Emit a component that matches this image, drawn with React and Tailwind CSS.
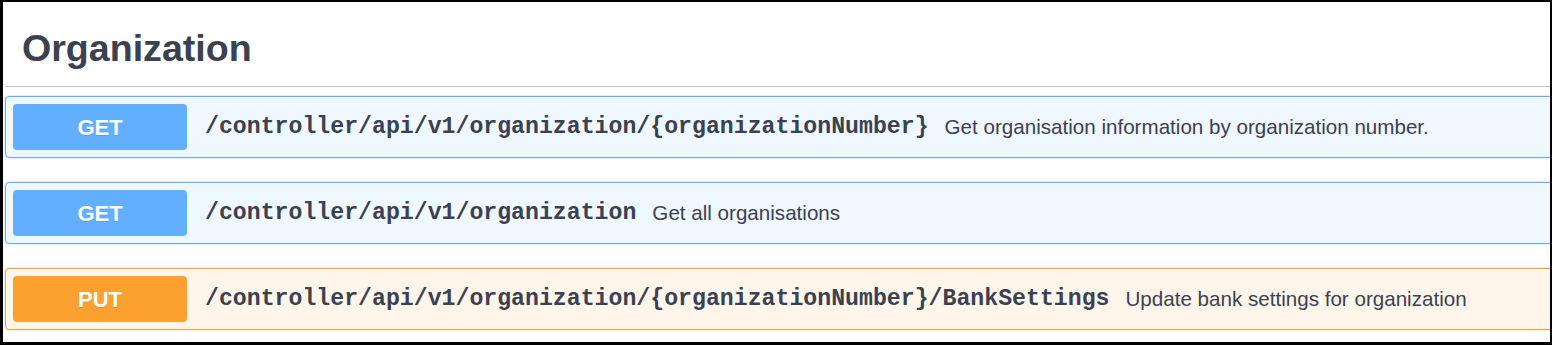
const endpoints = [
  {
    method: 'GET',
    path: '/controller/api/v1/organization/{organizationNumber}',
    summary: 'Get organisation information by organization number.',
  },
  {
    method: 'GET',
    path: '/controller/api/v1/organization',
    summary: 'Get all organisations',
  },
  {
    method: 'PUT',
    path: '/controller/api/v1/organization/{organizationNumber}/BankSettings',
    summary: 'Update bank settings for organization',
  },
];

function Endpoint({ method, path, summary }) {
  const isGet = method === 'GET';
  return (
    <div
      className={
        isGet
          ? 'flex items-center mr-[-20px] rounded-[4px] border border-[#61affe] bg-[#eff7ff] p-[7px] shadow-[0_0_3px_rgba(0,0,0,0.19)]'
          : 'flex items-center mr-[-20px] rounded-[4px] border border-[#fca130] bg-[#fff5ea] p-[7px] shadow-[0_0_3px_rgba(0,0,0,0.19)]'
      }
    >
      <span
        className={
          isGet
            ? 'flex h-[46px] w-[174px] shrink-0 items-center justify-center rounded-[4px] bg-[#61affe] text-[22px] font-bold text-white [text-shadow:0_1px_0_rgba(0,0,0,0.1)]'
            : 'flex h-[46px] w-[174px] shrink-0 items-center justify-center rounded-[4px] bg-[#fca130] text-[22px] font-bold text-white [text-shadow:0_1px_0_rgba(0,0,0,0.1)]'
        }
      >
        {method}
      </span>
      <span className="ml-[18px] font-['Liberation_Mono',monospace] text-[23.2px] font-bold text-[#3b4151] whitespace-nowrap">
        {path}
      </span>
      <span className="ml-[16px] text-[20.6px] text-[#3b4151] whitespace-nowrap">{summary}</span>
    </div>
  );
}

export default function App() {
  return (
    <div className="w-[1552px] h-[345px] overflow-hidden border-t-2 border-l-[3px] border-r-2 border-b-[3px] border-black bg-white font-['Liberation_Sans',Arial,sans-serif]">
      <div className="h-full overflow-hidden pl-[2px]">
        <div className="h-[85px] border-b border-[#c4c6cb] pl-[17px] pt-[27px]">
          <h4 className="text-[37.6px] leading-[38px] font-bold text-[#3b4151]">Organization</h4>
        </div>
        <div className="mt-[9px] flex flex-col gap-[24px]">
          {endpoints.map((e) => (
            <Endpoint key={e.path} {...e} />
          ))}
        </div>
      </div>
    </div>
  );
}
